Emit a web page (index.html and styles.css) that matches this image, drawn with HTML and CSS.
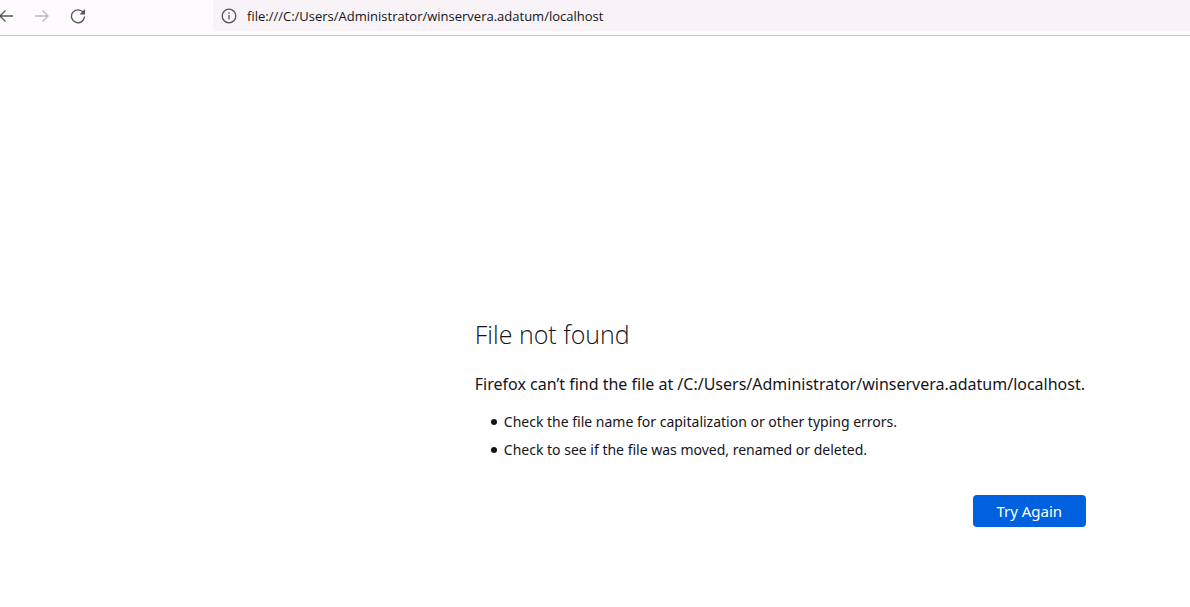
FILE: index.html
```html
<!DOCTYPE html>
<html lang="en">
<head>
    <meta charset="UTF-8">
    <meta name="viewport" content="width=device-width, initial-scale=1.0">
    <title>File not found</title>
    <link rel="stylesheet" href="styles.css">
</head>
<body>

<header class="toolbar">
    <nav class="nav-buttons">
        <button class="nav-btn" type="button" aria-label="Back">
            <svg width="16" height="16" viewBox="0 0 16 16"><path d="M15 8H2M7.500 2.500 2 8l5.500 5.500"/></svg>
        </button>
        <button class="nav-btn" type="button" aria-label="Forward" disabled>
            <svg width="16" height="16" viewBox="0 0 16 16"><path d="M1 8h13M8.500 2.500 14 8l-5.500 5.500"/></svg>
        </button>
        <button class="nav-btn" type="button" aria-label="Reload">
            <svg width="16" height="16" viewBox="0 0 16 16"><path d="M13.200 4.400A6.500 6.500 0 1 0 14.500 8.500"/><path class="solid" d="M15 1v5.500H9.500z"/></svg>
        </button>
    </nav>
    <div class="url-bar">
        <svg class="info" width="16" height="16" viewBox="0 0 16 16"><circle cx="8" cy="8" r="6.800"/><path d="M8 7v4.500M8 4.300v1.400"/></svg>
        <input class="url-input" type="text" aria-label="Address" value="file:///C:/Users/Administrator/winservera.adatum/localhost">
    </div>
</header>

<main class="error-page">
    <h1>File not found</h1>
    <p class="description">Firefox can’t find the file at /C:/Users/Administrator/winservera.adatum/localhost.</p>
    <ul>
        <li>Check the file name for capitalization or other typing errors.</li>
        <li>Check to see if the file was moved, renamed or deleted.</li>
    </ul>
    <div class="actions">
        <button class="try-again" type="button">Try Again</button>
    </div>
</main>

</body>
</html>
```

FILE: styles.css
```css
* {
    box-sizing: border-box;
}

body {
    margin: 0;
    background: #fff;
    color: #15141a;
    font-family: "Segoe UI", "Noto Sans", "Open Sans", sans-serif;
}

.toolbar {
    display: flex;
    height: 36px;
    padding-bottom: 4px;
    background: #fefbfe;
    border-bottom: 1px solid #c8c8cc;
}

.nav-buttons {
    display: flex;
    flex: 0 0 213px;
    gap: 4px;
    margin-left: -10px;
    margin-right: 10px;
}

.nav-btn {
    display: flex;
    align-items: center;
    justify-content: center;
    width: 32px;
    padding: 0;
    border: none;
    background: none;
}

.nav-btn:disabled {
    opacity: 0.4;
}

svg {
    fill: none;
    stroke: #55535c;
    stroke-width: 1.3;
}

.solid {
    fill: #55535c;
    stroke: none;
}

.url-bar {
    display: flex;
    flex: 1;
    align-items: center;
    gap: 10px;
    padding-left: 8px;
    background: #f7f3f7;
}

.info {
    flex: none;
}

.url-input {
    flex: 1;
    padding: 0;
    border: none;
    outline: none;
    background: none;
    color: #15141a;
    font-family: "Segoe UI", "Open Sans", sans-serif;
    font-size: 13px;
}

.error-page {
    width: 92%;
    margin-top: 280px;
    padding: 0 9px 0 39.9%;
}

h1 {
    margin: 0 0 20px;
    font-family: "Segoe UI", "Open Sans", sans-serif;
    font-size: 25px;
    font-weight: 300;
    line-height: 36px;
}

.description {
    margin: 0 0 12px;
    font-size: 16px;
    line-height: 24px;
    white-space: nowrap;
}

ul {
    margin: 0 0 31px;
    padding-left: 16px;
    font-size: 14px;
    line-height: 28px;
    list-style: none;
}

li {
    display: flex;
    align-items: center;
    gap: 7px;
}

li::before {
    content: "";
    width: 6px;
    height: 6px;
    border-radius: 50%;
    background: #15141a;
}

.actions {
    display: flex;
    justify-content: flex-end;
}

.try-again {
    min-width: 113px;
    height: 32px;
    border: none;
    border-radius: 4px;
    background: #0061e0;
    color: #fff;
    font-family: inherit;
    font-size: 15px;
}
```
